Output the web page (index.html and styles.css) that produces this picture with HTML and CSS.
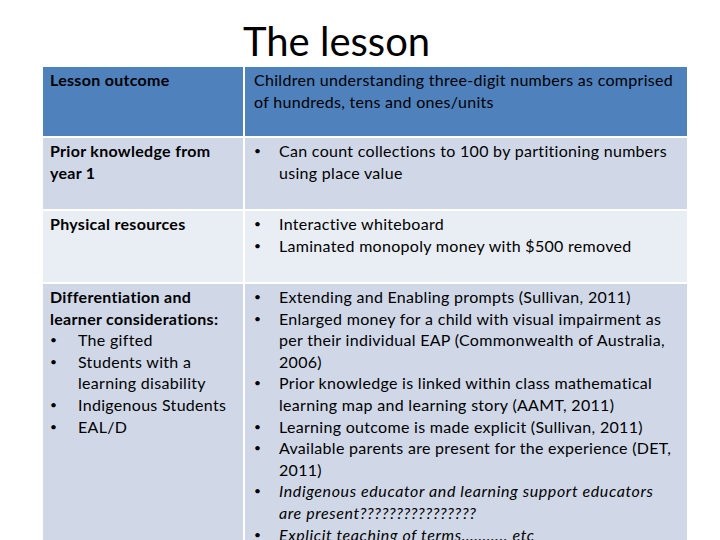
FILE: index.html
```html
<!DOCTYPE html>
<html>
<head>
<meta charset="utf-8">
<link rel="stylesheet" href="styles.css">
</head>
<body>
<div class="slide">
  <h1 class="title">The lesson</h1>
  <table class="plan">
    <tr class="row head">
      <td class="c1 strong">Lesson outcome</td>
      <td class="c2">Children understanding three-digit numbers as comprised of hundreds, tens and ones/units</td>
    </tr>
    <tr class="row dark">
      <td class="c1 strong">Prior knowledge from year 1</td>
      <td class="c2">
        <ul class="bl">
          <li>Can count collections to 100 by partitioning numbers using place value</li>
        </ul>
      </td>
    </tr>
    <tr class="row light">
      <td class="c1 strong">Physical resources</td>
      <td class="c2">
        <ul class="bl">
          <li>Interactive whiteboard</li>
          <li>Laminated monopoly money with $500 removed</li>
        </ul>
      </td>
    </tr>
    <tr class="row dark last">
      <td class="c1">
        <div class="strong">Differentiation and learner considerations:</div>
        <ul class="bl sub">
          <li>The gifted</li>
          <li>Students with a learning disability</li>
          <li>Indigenous Students</li>
          <li>EAL/D</li>
        </ul>
      </td>
      <td class="c2">
        <ul class="bl">
          <li>Extending and Enabling prompts (Sullivan, 2011)</li>
          <li>Enlarged money for a child with visual impairment as per their individual EAP (Commonwealth of Australia, 2006)</li>
          <li>Prior knowledge is linked within class mathematical learning map and learning story (AAMT, 2011)</li>
          <li>Learning outcome is made explicit (Sullivan, 2011)</li>
          <li>Available parents are present for the experience (DET, 2011)</li>
          <li class="it">Indigenous educator and learning support educators are present????????????????</li>
          <li class="it">Explicit teaching of terms……….. etc</li>
        </ul>
      </td>
    </tr>
  </table>
</div>
</body>
</html>
```
FILE: styles.css
```css
html, body {
  margin: 0;
  padding: 0;
  background: #ffffff;
  overflow: hidden;
}
.slide {
  width: 720px;
  height: 540px;
  overflow: hidden;
  font-family: Lato, "Liberation Sans", sans-serif;
  color: #000000;
}
.title {
  margin: 0;
  padding: 17px 0 0 243px;
  height: 48px;
  font-weight: 400;
  font-size: 40px;
  line-height: 48px;
}
.plan {
  margin-left: 41px;
  border-collapse: separate;
  border-spacing: 2px;
  font-size: 16px;
  letter-spacing: 0.3px;
  line-height: 21.6px;
}
.plan td {
  vertical-align: top;
  padding: 2px 6px 0 7px;
}
.c1 { width: 187px; }
.c2 { width: 421px; padding-left: 9px !important; padding-right: 12px !important; }
.row.head td { background: #4f81bd; height: 67px; }
.row.dark td { background: #d0d8e8; height: 69px; }
.row.light td { background: #e9edf4; height: 69px; }
.row.last td { height: 300px; }
.strong { font-weight: 700; }
.bl {
  list-style: none;
  margin: 0;
  padding: 0;
}
.bl li {
  position: relative;
  padding-left: 25px;
}
.bl li::before {
  content: "•";
  position: absolute;
  left: 0;
  top: 0;
  font-size: 12px;
  font-style: normal;
}
.bl.sub li { padding-left: 28px; }
.it { font-style: italic; letter-spacing: 0.6px; }
```
